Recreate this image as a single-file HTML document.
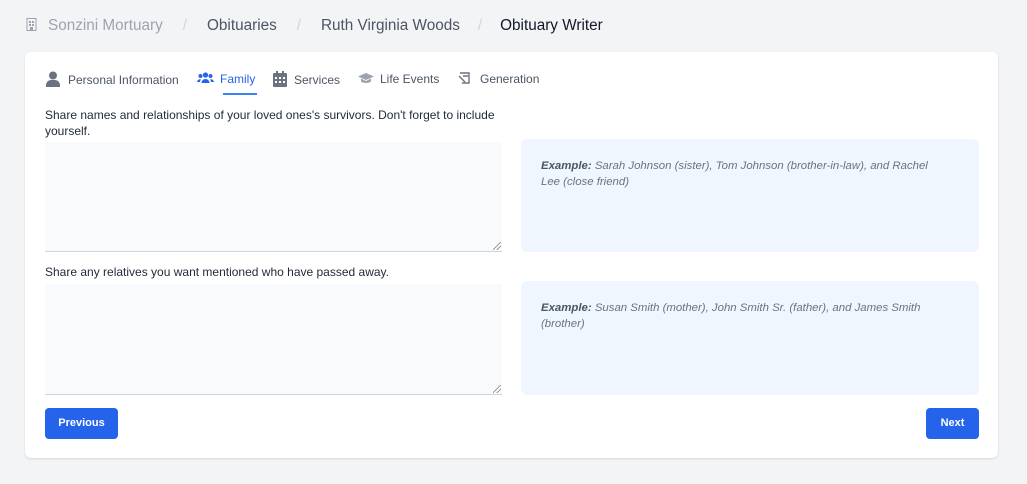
<!DOCTYPE html>
<html><head><style>
*{box-sizing:border-box;margin:0;padding:0}
body{width:1027px;height:484px;background:#f3f4f6;font-family:"Liberation Sans",sans-serif;position:relative;overflow:hidden}
.a{position:absolute}
.bc{top:15px;font-size:15.3px;line-height:20px;color:#4b5563;white-space:nowrap}
.sep{color:#d1d5db;margin:0 20px}
.card{left:25px;top:52px;width:973px;height:406px;background:#fff;border-radius:6px;box-shadow:0 1px 2px rgba(0,0,0,.12)}
.tab{top:71px;font-size:12px;line-height:16px;color:#4b5563;white-space:nowrap}
.lbl{font-size:12px;line-height:16px;color:#1f2937;width:470px}
.ta{background:#f9fafb;border-bottom:1px solid #d1d5db;width:457px}
.ex{background:#eff6ff;border-radius:6px;width:458px;padding:19px 36px 19px 20px;font-size:11.4px;line-height:16px;font-style:italic;color:#6b7280}
.ex b{color:#4b5563}
.btn{background:#2563eb;color:#fff;font-weight:bold;font-size:11px;border-radius:4px;height:31px;line-height:31px;text-align:center;top:408px}
.grip{right:1px;bottom:1px;width:8px;height:8px;background:linear-gradient(135deg,transparent 45%,#777 45%,#777 52%,transparent 52%,transparent 70%,#777 70%,#777 77%,transparent 77%)}
</style></head><body>
<div class="a bc" style="left:26px;top:16px">
<svg width="11" height="13" viewBox="0 0 11 13" style="vertical-align:-1px;margin-right:11px"><rect x="1" y="0.5" width="9" height="12" fill="none" stroke="#9ca3af"/><rect x="3" y="3" width="2" height="2" fill="#9ca3af"/><rect x="6" y="3" width="2" height="2" fill="#9ca3af"/><rect x="3" y="6" width="2" height="2" fill="#9ca3af"/><rect x="6" y="6" width="2" height="2" fill="#9ca3af"/><rect x="4" y="9" width="3" height="3" fill="#9ca3af"/></svg><span style="color:#9ca3af">Sonzini Mortuary</span><span class="sep">/</span>Obituaries<span class="sep">/</span>Ruth Virginia Woods<span class="sep" style="margin:0 18px">/</span><span style="color:#111827">Obituary Writer</span></div>
<div class="a card"></div>
<div class="a tab" style="left:45px"><svg width="16" height="16" viewBox="0 0 16 16" style="vertical-align:-3px;margin-right:7px"><circle cx="8" cy="4.5" r="4" fill="#6b7280"/><path d="M1 16v-2a5 5 0 0 1 5-5h4a5 5 0 0 1 5 5v2z" fill="#6b7280"/></svg>Personal Information</div>
<div class="a tab" style="left:197px;color:#2563eb"><svg width="17" height="14" viewBox="0 0 17 14" style="vertical-align:-2px;margin-right:6px"><circle cx="8.5" cy="4" r="2.6" fill="#2563eb"/><circle cx="3.5" cy="5" r="2" fill="#2563eb"/><circle cx="13.5" cy="5" r="2" fill="#2563eb"/><path d="M4.5 12a4 4 0 0 1 8 0z M0 11a3 3 0 0 1 4-2.5 4 4 0 0 0-1 2.5z M17 11a3 3 0 0 0-4-2.5 4 4 0 0 1 1 2.5z" fill="#2563eb"/></svg>Family</div>
<div class="a" style="left:223px;top:93px;width:34px;height:2px;background:#3b82f6"></div>
<div class="a tab" style="left:273px"><svg width="14" height="16" viewBox="0 0 14 16" style="vertical-align:-3px;margin-right:7px"><rect x="3" y="0" width="2" height="3" fill="#6b7280"/><rect x="9" y="0" width="2" height="3" fill="#6b7280"/><rect x="0" y="2" width="14" height="14" rx="1" fill="#6b7280"/><g fill="#fff"><rect x="2" y="6" width="2" height="2"/><rect x="6" y="6" width="2" height="2"/><rect x="10" y="6" width="2" height="2"/><rect x="2" y="10" width="2" height="2"/><rect x="6" y="10" width="2" height="2"/><rect x="10" y="10" width="2" height="2"/></g></svg>Services</div>
<div class="a tab" style="left:358px"><svg width="16" height="12" viewBox="0 0 16 12" style="vertical-align:-1px;margin-right:6px"><path d="M8 1 0 4.5 8 8 16 4.5z M3 6.5v3c2 2 8 2 10 0v-3L8 9z" fill="#9ca3af"/></svg>Life Events</div>
<div class="a tab" style="left:458px"><svg width="14" height="14" viewBox="0 0 14 14" style="vertical-align:-2px;margin-right:8px"><path d="M2 2h9v10H4" fill="none" stroke="#6b7280" stroke-width="1.4"/><path d="M1 5l6 6M5 5h5" stroke="#6b7280" stroke-width="1.4"/></svg>Generation</div>
<div class="a lbl" style="left:45px;top:107px">Share names and relationships of your loved ones's survivors. Don't forget to include yourself.</div>
<div class="a ta" style="left:45px;top:142px;height:110px"><div class="a grip"></div></div>
<div class="a ex" style="left:521px;top:139px;height:113px"><b>Example:</b> Sarah Johnson (sister), Tom Johnson (brother-in-law), and Rachel Lee (close friend)</div>
<div class="a lbl" style="left:45px;top:264px">Share any relatives you want mentioned who have passed away.</div>
<div class="a ta" style="left:45px;top:284px;height:111px"><div class="a grip"></div></div>
<div class="a ex" style="left:521px;top:281px;height:114px"><b>Example:</b> Susan Smith (mother), John Smith Sr. (father), and James Smith (brother)</div>
<div class="a btn" style="left:45px;width:73px">Previous</div>
<div class="a btn" style="left:926px;width:53px">Next</div>
</body></html>
